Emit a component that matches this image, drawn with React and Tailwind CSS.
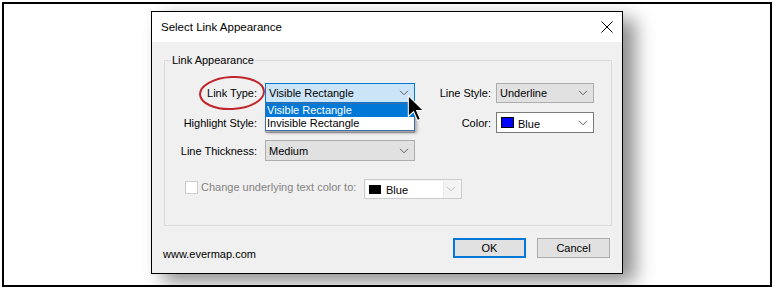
import React from 'react';

function Chevron({ color = '#5f5f5f' }) {
  return (
    <svg width="10" height="6" viewBox="0 0 10 6" className="shrink-0">
      <path d="M1 0.8l4 4 4-4" fill="none" stroke={color} strokeWidth="1" />
    </svg>
  );
}

function Combo({ children, className = '', chevron }) {
  return (
    <div className={`flex h-full items-center justify-between pl-[3px] pr-[5px] ${className}`}>
      <div className="flex items-center">{children}</div>
      <Chevron color={chevron} />
    </div>
  );
}

export default function App() {
  return (
    <div className="w-[774px] h-[290px] bg-white p-[2px] font-['Liberation_Sans',Arial,sans-serif] text-[11px] leading-[14px] text-black">
      <div className="h-[285px] border-2 border-black overflow-hidden">
        <div className="ml-[147px] mt-[7px] w-[472px] h-[263px] border border-black flex flex-col shadow-[12px_8px_18px_rgba(0,0,0,0.45)]">
          {/* title bar */}
          <div className="h-[30px] bg-white flex items-center justify-between pl-[9px] pr-[9px]">
            <span className="text-[11.5px]">Select Link Appearance</span>
            <svg width="12" height="12" viewBox="0 0 12 12">
              <path d="M0.5 0.5l11 11M11.5 0.5l-11 11" stroke="#000" strokeWidth="1" />
            </svg>
          </div>

          <div className="flex-1 bg-[#f0f0f0] flex flex-col">
            <fieldset className="ml-[12px] mr-[10px] mt-[11px] border border-[#dcdcdc] pb-[26px]">
              <legend className="ml-[6px] px-[1px]">Link Appearance</legend>

              <div className="pt-[16px] flex flex-col">
                {/* row 1 */}
                <div className="flex h-[20px] items-center">
                  <div className="relative w-[93px] text-right pr-[1px]">
                    Link Type:
                    <svg width="70" height="36" viewBox="0 0 70 36" className="absolute left-[33px] top-[-11px]">
                      <ellipse cx="34" cy="18" rx="32" ry="16" fill="none" stroke="#c0262c" strokeWidth="2" transform="rotate(-3 34 18)" />
                    </svg>
                  </div>
                  <div className="relative ml-[7px] w-[150px] h-[20px]">
                    <Combo className="border border-[#0078d7] bg-[#cce4f7]">Visible Rectangle</Combo>
                    <div className="absolute left-0 top-[20px] z-10 w-[150px] border border-[#3c6fa8] bg-white shadow-[2px_2px_3px_rgba(0,0,0,0.3)]">
                      <div className="h-[13px] leading-[13px] bg-[#0078d7] text-white pl-[1px]">Visible Rectangle</div>
                      <div className="h-[13px] leading-[13px] pl-[1px]">Invisible Rectangle</div>
                    </div>
                    <svg width="17" height="28" viewBox="0 0 13 21" className="absolute left-[142px] top-[11px] z-20">
                      <path d="M1 1V17L5 13.2L8 20L10.2 19L7.3 12.4H12.4Z" fill="#000" stroke="#fff" strokeWidth="0.8" strokeLinejoin="round" />
                    </svg>
                  </div>
                  <div className="w-[76px] text-right">Line Style:</div>
                  <div className="ml-[5px] w-[98px] h-[20px]">
                    <Combo className="border border-[#adadad] bg-[#e1e1e1]">Underline</Combo>
                  </div>
                </div>

                {/* row 2 */}
                <div className="mt-[9px] flex h-[21px] items-center">
                  <div className="w-[93px] text-right pr-[1px]">Highlight Style:</div>
                  <div className="ml-[7px] w-[150px] h-[21px]">
                    <Combo className="border border-[#adadad] bg-[#e1e1e1]" />
                  </div>
                  <div className="w-[76px] text-right">Color:</div>
                  <div className="ml-[5px] w-[98px] h-[21px]">
                    <Combo className="border border-[#7a7a7a] bg-white pl-[4px]">
                      <span className="w-[13px] h-[11px] bg-[#0000ff] border border-black mr-[4px]" />
                      <span className="mt-[2px]">Blue</span>
                    </Combo>
                  </div>
                </div>

                {/* row 3 */}
                <div className="mt-[7px] flex h-[21px] items-center">
                  <div className="w-[93px] text-right pr-[1px]">Line Thickness:</div>
                  <div className="ml-[7px] w-[150px] h-[21px]">
                    <Combo className="border border-[#adadad] bg-[#e1e1e1]">Medium</Combo>
                  </div>
                </div>

                {/* row 4 */}
                <div className="mt-[18px] flex h-[20px] items-center">
                  <div className="w-[199px] flex items-center pl-[20px] self-start mt-[1px]">
                    <span className="w-[13px] h-[13px] border border-[#cccccc] bg-white" />
                    <span className="ml-[3px] text-[#838383]">Change underlying text color to:</span>
                  </div>
                  <div className="w-[98px] h-[20px] border border-[#cccccc] bg-[#f4f4f4] flex items-center justify-between pr-[5px]">
                    <div className="ml-[1px] h-[17px] w-[78px] bg-white border-r border-[#e8e8e8] flex items-center pl-[3px]">
                      <span className="w-[12px] h-[9px] bg-black mr-[5px]" />
                      <span className="mt-[2px]">Blue</span>
                    </div>
                    <Chevron color="#bcbcbc" />
                  </div>
                </div>
              </div>
            </fieldset>

            {/* bottom */}
            <div className="mt-[12px] flex justify-between pl-[11px] pr-[12px]">
              <span className="pt-[9px]">www.evermap.com</span>
              <div className="flex gap-[11px]">
                <button className="w-[73px] h-[20px] border-2 border-[#0078d7] bg-[#e1e1e1] leading-[14px]">OK</button>
                <button className="w-[73px] h-[20px] border border-[#adadad] bg-[#e1e1e1] leading-[14px]">Cancel</button>
              </div>
            </div>
          </div>
        </div>
      </div>
    </div>
  );
}
